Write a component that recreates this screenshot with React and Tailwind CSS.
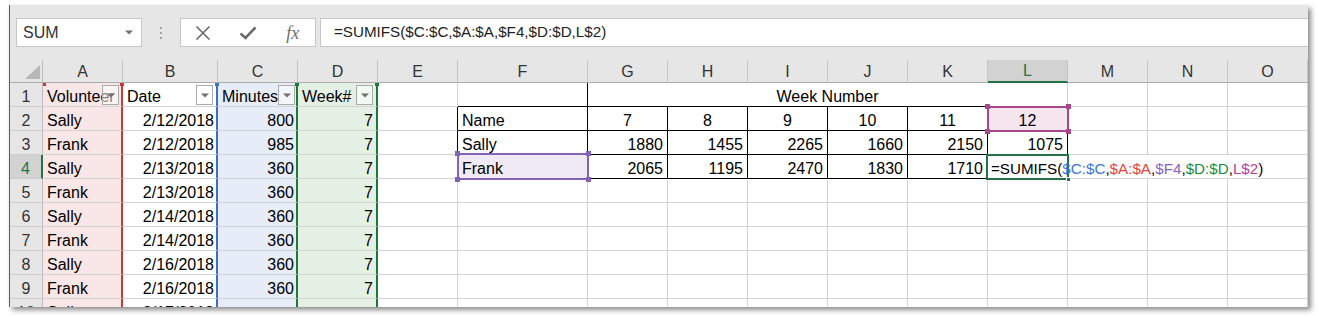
import { Fragment } from "react";

const COLS = ["A", "B", "C", "D", "E", "F", "G", "H", "I", "J", "K", "L", "M", "N", "O"];

const log = [
  ["Sally", "2/12/2018", "800", "7"],
  ["Frank", "2/12/2018", "985", "7"],
  ["Sally", "2/13/2018", "360", "7"],
  ["Frank", "2/13/2018", "360", "7"],
  ["Sally", "2/14/2018", "360", "7"],
  ["Frank", "2/14/2018", "360", "7"],
  ["Sally", "2/16/2018", "360", "7"],
  ["Frank", "2/16/2018", "360", "7"],
  ["Sally", "2/17/2018", "", ""],
];

const summary = {
  2: ["Name", "7", "8", "9", "10", "11", "12"],
  3: ["Sally", "1880", "1455", "2265", "1660", "2150", "1075"],
  4: ["Frank", "2065", "1195", "2470", "1830", "1710", ""],
};

const colBg = ["bg-[#f9e6e6]", "", "bg-[#e6edf8]", "bg-[#e5f0e5]"];

function rightBorder(r, c) {
  if (c === 0) return "border-r-2 border-r-[#c5393b]";
  if (c === 1) return "border-r-2 border-r-[#3d6fc7]";
  if (c === 2 || c === 3) return "border-r-2 border-r-[#1b7a36]";
  if (c === 4 && r >= 2 && r <= 4) return "border-r border-r-black";
  if (c === 5 && r <= 4) return "border-r border-r-black";
  if (c >= 6 && c <= 11 && r >= 2 && r <= 4) return "border-r border-r-black";
  if ((c === 12 || c === 13) && r === 4) return "border-r border-r-transparent";
  return "border-r border-r-[#d4d4d4]";
}

function bottomBorder(r, c) {
  if (c >= 5 && c <= 11 && r <= 4) return "border-b border-b-black";
  return "border-b border-b-[#d4d4d4]";
}

function Corners({ color }) {
  const sq = `absolute w-[5px] h-[5px] ${color}`;
  return (
    <>
      <div className={`${sq} -left-[4px] -top-[4px]`} />
      <div className={`${sq} -right-[4px] -top-[4px]`} />
      <div className={`${sq} -left-[4px] -bottom-[4px]`} />
      <div className={`${sq} -right-[4px] -bottom-[4px]`} />
    </>
  );
}

function FilterBtn({ className }) {
  return (
    <div
      className={`absolute top-[2px] w-[17px] h-[20px] border border-[#ababab] bg-white/50 flex items-center justify-center z-10 ${className}`}
    >
      <svg width="8" height="5" viewBox="0 0 8 5">
        <path d="M0 0.5h8L4 4.5z" fill="#6f6f6f" />
      </svg>
    </div>
  );
}

function FormulaBar() {
  return (
    <div className="h-[55px] shrink-0 bg-[#e6e6e6] flex items-start pt-[13px] pl-[6px]">
      <div className="w-[126px] h-[29px] bg-white border border-[#c6c6c6] flex items-center justify-between pl-[6px] pr-[8px] text-[16px] text-[#333]">
        <span>SUM</span>
        <svg width="8" height="5" viewBox="0 0 8 5">
          <path d="M0 0.5h8L4 4.5z" fill="#707070" />
        </svg>
      </div>
      <div className="w-[38px] h-[29px] flex flex-col items-center justify-center gap-[3px]">
        <div className="w-[2px] h-[2px] bg-[#a3a3a3]" />
        <div className="w-[2px] h-[2px] bg-[#a3a3a3]" />
        <div className="w-[2px] h-[2px] bg-[#a3a3a3]" />
      </div>
      <div className="w-[136px] h-[29px] bg-white border border-[#c6c6c6] flex items-center">
        <div className="w-[45px] flex justify-center">
          <svg width="16" height="14" viewBox="0 0 16 14">
            <path d="M1.5 0.5L14.5 13.5M14.5 0.5L1.5 13.5" stroke="#6b6b6b" strokeWidth="1.6" />
          </svg>
        </div>
        <div className="w-[45px] flex justify-center">
          <svg width="18" height="14" viewBox="0 0 18 14">
            <path d="M1.5 7.5L6.5 12L16.5 1.5" stroke="#6b6b6b" strokeWidth="2.6" fill="none" />
          </svg>
        </div>
        <div className="w-[45px] flex justify-center font-['Liberation_Serif',serif] italic text-[18px] text-[#707070] leading-none">
          fx
        </div>
      </div>
      <div className="ml-[4px] flex-1 h-[29px] bg-white border border-r-0 border-[#c6c6c6] flex items-center pl-[13px] text-[15.2px] text-[#222] whitespace-nowrap">
        =SUMIFS($C:$C,$A:$A,$F4,$D:$D,L$2)
      </div>
    </div>
  );
}

function RowHead({ r }) {
  const sel = r === 4;
  return (
    <div
      className={`border-b border-b-[#cdcdcd] text-center leading-[24px] pt-[2px] text-[16px] overflow-hidden ${
        sel
          ? "bg-[#d2d2d2] text-[#217346] border-r-2 border-r-[#217346]"
          : "bg-[#e6e6e6] text-[#333] border-r border-r-[#bdbdbd]"
      }`}
    >
      {r}
    </div>
  );
}

function HeaderCell({ label, c }) {
  const sel = label === "L";
  return (
    <div
      className={`text-center text-[16px] border-r border-r-[#c4c4c4] ${
        sel
          ? "bg-[#d2d2d2] text-[#217346] border-b-2 border-b-[#217346] leading-[22px]"
          : "bg-[#e6e6e6] text-[#333] border-b border-b-[#ababab] leading-[23px]"
      }`}
    >
      {label}
    </div>
  );
}

function TitleRow() {
  const heads = ["Volunteer", "Date", "Minutes", "Week#"];
  const btnPos = ["right-[2px]", "right-[3px]", "right-[1px]", "right-[3px]"];
  return (
    <>
      {heads.map((h, c) => (
        <div
          key={h}
          className={`relative ${colBg[c]} ${rightBorder(1, c)} ${bottomBorder(1, c)}`}
        >
          <div className="h-full overflow-hidden whitespace-nowrap leading-[24px] pt-[2px] pl-[4px]">{h}</div>
          <FilterBtn className={btnPos[c]} />
          {c === 0 && <div className="absolute left-0 top-0 w-[3px] h-[3px] bg-[#c5393b] z-20" />}
          {c === 0 && <div className="absolute -right-[3px] top-0 w-[4px] h-[3px] bg-[#c5393b] z-20" />}
          {c === 1 && <div className="absolute -right-[3px] top-0 w-[4px] h-[3px] bg-[#3d6fc7] z-20" />}
          {c === 2 && <div className="absolute -right-[3px] top-0 w-[4px] h-[3px] bg-[#1b7a36] z-20" />}
          {c === 3 && <div className="absolute -right-[3px] top-0 w-[4px] h-[3px] bg-[#1b7a36] z-20" />}
        </div>
      ))}
      <div className={`${rightBorder(1, 4)} ${bottomBorder(1, 4)}`} />
      <div className={`${rightBorder(1, 5)} ${bottomBorder(1, 5)}`} />
      <div className="col-span-6 border-r border-r-[#d4d4d4] border-b border-b-black text-center leading-[24px] pt-[2px]">
        Week Number
      </div>
      {[12, 13, 14].map((c) => (
        <div key={c} className={`${rightBorder(1, c)} ${bottomBorder(1, c)}`} />
      ))}
    </>
  );
}

function Formula() {
  return (
    <span className="text-[15.2px]">
      =SUMIFS(<span className="text-[#3f78d6]">$C:$C</span>,
      <span className="text-[#e2453b]">$A:$A</span>,
      <span className="text-[#8a63c4]">$F4</span>,
      <span className="text-[#1f8a3c]">$D:$D</span>,
      <span className="text-[#b0449a]">L$2</span>)
    </span>
  );
}

function DataCell({ r, c }) {
  let text = "";
  let align = "";
  let bg = "";
  let extra = null;

  if (c <= 3) {
    text = log[r - 2][c];
    bg = colBg[c];
    align = c === 0 ? "text-left pl-[4px]" : c === 3 ? "text-right pr-[3px]" : "text-right pr-[2px]";
  } else if (c >= 5 && c <= 11 && r <= 4) {
    text = summary[r][c - 5];
    align = c === 5 ? "text-left pl-[4px]" : r === 2 ? "text-center" : "text-right pr-[4px]";
  }

  if (r === 2 && c === 11) {
    bg = "bg-[#f4e5ee]";
    extra = (
      <div className="absolute -left-[1px] -top-[1px] -right-[2px] -bottom-[2px] border-2 border-[#a8488c] z-10">
        <Corners color="bg-[#a8488c]" />
      </div>
    );
  }
  if (r === 4 && c === 5) {
    bg = "bg-[#efeaf6]";
    extra = (
      <div className="absolute -left-[1px] -top-[2px] -right-[2px] -bottom-[2px] border-2 border-[#8462b5] z-10">
        <Corners color="bg-[#8462b5]" />
      </div>
    );
  }
  if (r === 4 && c === 11) {
    extra = (
      <>
        <div className="absolute -left-[2px] -top-[1px] -right-[2px] -bottom-[2px] border-2 border-[#217346] z-10">
          <div className="absolute -right-[4px] -bottom-[4px] w-[5px] h-[5px] bg-[#217346] border border-white" />
        </div>
        <div className="absolute left-[3px] top-0 leading-[24px] pt-[2px] whitespace-nowrap z-20">
          <Formula />
        </div>
      </>
    );
  }

  return (
    <div className={`relative ${bg} ${rightBorder(r, c)} ${bottomBorder(r, c)}`}>
      <div className={`h-full overflow-hidden whitespace-nowrap leading-[24px] pt-[2px] ${align}`}>{text}</div>
      {extra}
    </div>
  );
}

function Sheet() {
  return (
    <div className="grid grid-cols-[33px_80px_95px_80px_80px_80px_130px_80px_80px_80px_80px_80px_80px_80px_80px_80px] grid-rows-[23px_repeat(10,24px)] text-[16px] text-black">
      <div className="relative bg-[#e6e6e6] border-r border-r-[#bdbdbd] border-b border-b-[#ababab]">
        <svg className="absolute left-0 top-0" width="33" height="23" viewBox="0 0 33 23">
          <path d="M15 19H30V5z" fill="#b6b6b6" />
        </svg>
      </div>
      {COLS.map((col, c) => (
        <HeaderCell key={col} label={col} c={c} />
      ))}
      {Array.from({ length: 10 }, (_, i) => i + 1).map((r) => (
        <Fragment key={r}>
          <RowHead r={r} />
          {r === 1 ? <TitleRow /> : COLS.map((col, c) => <DataCell key={col} r={r} c={c} />)}
        </Fragment>
      ))}
    </div>
  );
}

export default function App() {
  return (
    <div className="w-[1318px] h-[316px] bg-white pt-[5px] pl-[9px] font-['Liberation_Sans',Arial,sans-serif]">
      <div className="w-[1299px] h-[302px] overflow-hidden border-l border-l-[#3d6b4f] bg-white shadow-[3px_3px_5px_rgba(0,0,0,0.45)] flex flex-col">
        <FormulaBar />
        <Sheet />
      </div>
    </div>
  );
}
